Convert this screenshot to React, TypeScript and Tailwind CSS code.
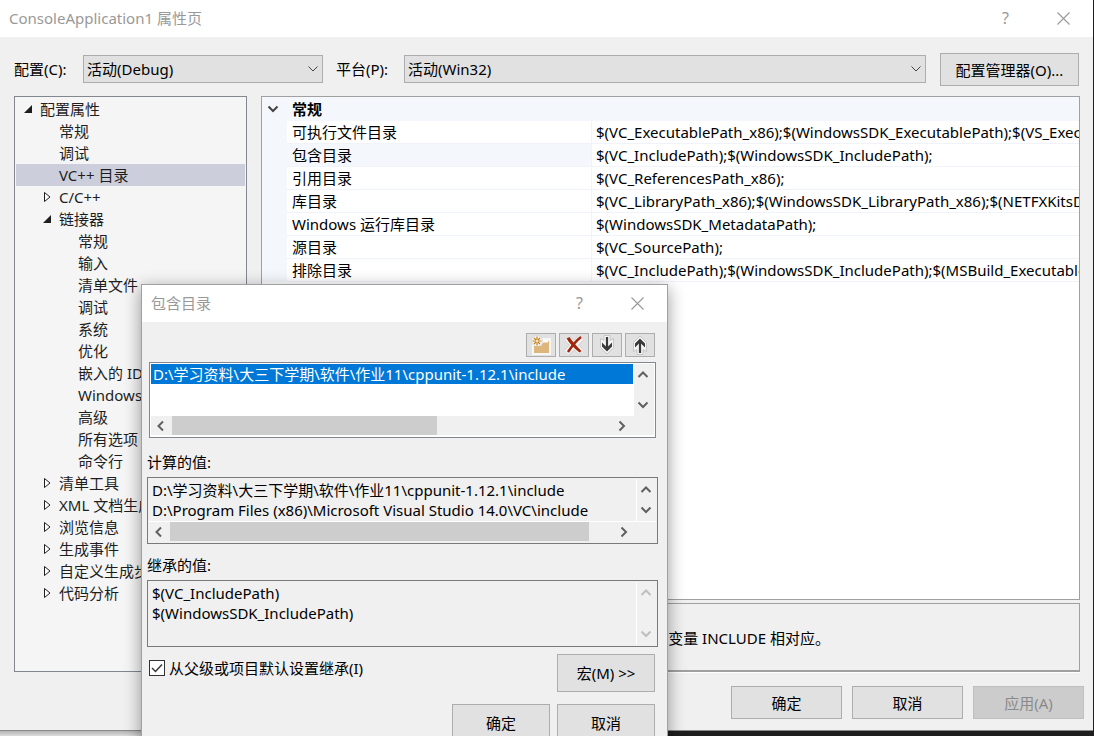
import type { ReactNode } from 'react';

type TreeItem = {
    label: string;
    level: number;
    state?: 'open' | 'closed';
    selected?: boolean;
};

const treeItems: TreeItem[] = [
    { label: '配置属性', level: 0, state: 'open' },
    { label: '常规', level: 1 },
    { label: '调试', level: 1 },
    { label: 'VC++ 目录', level: 1, selected: true },
    { label: 'C/C++', level: 1, state: 'closed' },
    { label: '链接器', level: 1, state: 'open' },
    { label: '常规', level: 2 },
    { label: '输入', level: 2 },
    { label: '清单文件', level: 2 },
    { label: '调试', level: 2 },
    { label: '系统', level: 2 },
    { label: '优化', level: 2 },
    { label: '嵌入的 IDL', level: 2 },
    { label: 'Windows 元数据', level: 2 },
    { label: '高级', level: 2 },
    { label: '所有选项', level: 2 },
    { label: '命令行', level: 2 },
    { label: '清单工具', level: 1, state: 'closed' },
    { label: 'XML 文档生成器', level: 1, state: 'closed' },
    { label: '浏览信息', level: 1, state: 'closed' },
    { label: '生成事件', level: 1, state: 'closed' },
    { label: '自定义生成步骤', level: 1, state: 'closed' },
    { label: '代码分析', level: 1, state: 'closed' },
];

const levelPadding = ['pl-[5px]', 'pl-[24px]', 'pl-[43px]'];

const properties = [
    { name: '可执行文件目录', value: '$(VC_ExecutablePath_x86);$(WindowsSDK_ExecutablePath);$(VS_ExecutablePath)' },
    { name: '包含目录', value: '$(VC_IncludePath);$(WindowsSDK_IncludePath);', selected: true },
    { name: '引用目录', value: '$(VC_ReferencesPath_x86);' },
    { name: '库目录', value: '$(VC_LibraryPath_x86);$(WindowsSDK_LibraryPath_x86);$(NETFXKitsDir)' },
    { name: 'Windows 运行库目录', value: '$(WindowsSDK_MetadataPath);' },
    { name: '源目录', value: '$(VC_SourcePath);' },
    { name: '排除目录', value: '$(VC_IncludePath);$(WindowsSDK_IncludePath);$(MSBuild_ExecutablePath)' },
];

const arrowPaths = {
    up: 'M1.5 8 L6 3.5 L10.5 8',
    down: 'M1.5 3.5 L6 8 L10.5 3.5',
    left: 'M8 1.5 L3.5 6 L8 10.5',
    right: 'M3.5 1.5 L8 6 L3.5 10.5',
};

const Arrow = ({ dir, thin }: { dir: keyof typeof arrowPaths; thin?: boolean }) => (
    <svg width="12" height="12" viewBox="0 0 12 12" fill="none" stroke="currentColor" strokeWidth={thin ? 1 : 2}>
        <path d={arrowPaths[dir]} />
    </svg>
);

const TitleBar = ({ title }: { title: string }) => (
    <header className="flex h-[37px] shrink-0 items-center bg-white pl-[9px] pr-[23px] pb-px text-[#999999]">
        <h1 className="flex-1">{title}</h1>
        <button aria-label="帮助" className="flex w-[13px] justify-center text-[16px]">?</button>
        <button aria-label="关闭" className="ml-[45px]">
            <svg width="13" height="13" viewBox="0 0 13 13" stroke="currentColor" strokeWidth="1.1">
                <path d="M0.5 0.5 L12.5 12.5 M12.5 0.5 L0.5 12.5" />
            </svg>
        </button>
    </header>
);

const Expander = ({ state }: { state?: 'open' | 'closed' }) => (
    <span className="flex w-[19px] shrink-0 pl-[2px]">
        {state === 'open' && (
            <svg width="10" height="10" viewBox="0 0 10 10">
                <path d="M9 1 V9 H1 Z" fill="#1e1e1e" />
            </svg>
        )}
        {state === 'closed' && (
            <svg width="10" height="12" viewBox="0 0 10 12">
                <path d="M2.5 1.5 V10.5 L8 6 Z" fill="#ffffff" stroke="#1e1e1e" />
            </svg>
        )}
    </span>
);

const Combo = ({ id, value, className }: { id: string; value: string; className: string }) => (
    <div className={`relative ${className}`}>
        <select
            id={id}
            className="block h-[28px] w-full appearance-none border border-[#adadad] bg-[#e1e1e1] pl-[3px] pr-6 text-black"
        >
            <option>{value}</option>
        </select>
        <span className="pointer-events-none absolute inset-y-0 right-[4px] flex items-center text-[#444444]">
            <Arrow dir="down" thin />
        </span>
    </div>
);

const PushButton = ({ children, className, disabled }: { children: ReactNode; className: string; disabled?: boolean }) => (
    <button
        disabled={disabled}
        className={`flex items-center justify-center border border-[#adadad] bg-[#e1e1e1] disabled:border-[#bfbfbf] disabled:bg-[#cccccc] disabled:text-[#8a8a8a] ${className}`}
    >
        {children}
    </button>
);

const VerticalScroll = ({ className }: { className: string }) => (
    <div className={`flex w-[20px] shrink-0 flex-col items-center justify-between pr-[2px] ${className}`}>
        <button aria-label="向上滚动"><Arrow dir="up" /></button>
        <button aria-label="向下滚动"><Arrow dir="down" /></button>
    </div>
);

const HorizontalScroll = ({ thumb }: { thumb: string }) => (
    <div className="flex h-[19px] shrink-0 items-center bg-[#f0f0f0] pr-[26px] text-[#606060]">
        <button aria-label="向左滚动" className="flex w-[21px] shrink-0 justify-center pr-[2px]"><Arrow dir="left" /></button>
        <div className="h-full flex-1">
            <div className={`h-full bg-[#cdcdcd] ${thumb}`} />
        </div>
        <button aria-label="向右滚动" className="shrink-0"><Arrow dir="right" /></button>
    </div>
);

const NewFolderIcon = () => (
    <svg width="22" height="22" viewBox="0 0 22 22">
        <path d="M3 8 H11 L13 5 H20 V20 H3 Z" fill="#f6f6f6" stroke="#f6f6f6" strokeWidth="2" />
        <circle cx="7" cy="7" r="5.5" fill="#f6f6f6" stroke="#cfcfcf" strokeWidth="0.6" />
        <path d="M4 12 H11 L13 9 V7 H19 V19 H4 Z" fill="#dcb67a" />
        <path d="M13 6.5 H18 V8.5 H13 Z" fill="#ffffff" />
        <path d="M7 2.5 V11.5 M2.5 7 H11.5 M4 4 L10 10 M10 4 L4 10" stroke="#c27d1a" strokeWidth="1.2" />
        <circle cx="7" cy="7" r="1.5" fill="#fbe3b0" />
    </svg>
);

const DeleteIcon = () => (
    <svg width="22" height="22" viewBox="0 0 22 22" fill="none">
        <path d="M4 4 L18 18 M18 3.5 L4 18.5" stroke="#c8c8c8" strokeWidth="7" />
        <path d="M4 4 L18 18 M18 3.5 L4 18.5" stroke="#f6f6f6" strokeWidth="6" />
        <path d="M3.5 4.5 L6.5 3 Q10 8.5 18.5 17 L16.5 18.5 Q8 12 3.5 4.5 Z" fill="#a1260d" />
        <path d="M18 3 Q12 7.5 5 18" stroke="#a1260d" strokeWidth="2.6" />
    </svg>
);

const MoveIcon = ({ up }: { up?: boolean }) => (
    <svg width="22" height="22" viewBox="0 0 22 22" className={up ? 'rotate-180' : ''} fill="none">
        <path d="M8 1.5 H14 V6.5 L17.5 4.5 V13.5 L11 20 L4.5 13.5 V4.5 L8 6.5 Z" fill="#f6f6f6" stroke="#bdbdbd" strokeWidth="0.8" />
        <path d="M11 3 V16" stroke="#3a3a3a" strokeWidth="2.2" />
        <path d="M6 8.5 L11 13.5 L16 8.5 V12.5 L11 17.5 L6 12.5 Z" fill="#3a3a3a" />
    </svg>
);

const toolButtons = [
    { label: '新行', icon: <NewFolderIcon /> },
    { label: '删除', icon: <DeleteIcon /> },
    { label: '下移', icon: <MoveIcon /> },
    { label: '上移', icon: <MoveIcon up /> },
];

const ConfigTree = () => (
    <nav className="w-[233px] shrink-0 overflow-hidden border border-[#828790] bg-[#f5f5f5] p-px text-[#1e1e1e]">
        <ul>
            {treeItems.map((item, i) => (
                <li
                    key={i}
                    className={`flex h-[22px] items-center whitespace-nowrap ${levelPadding[item.level]} ${item.selected ? 'bg-[#cccedb]' : ''}`}
                >
                    <Expander state={item.state} />
                    {item.label}
                </li>
            ))}
        </ul>
    </nav>
);

const PropertyGrid = () => (
    <div className="min-h-0 flex-1 overflow-hidden border border-[#a0a0a0] bg-white">
        <table className="w-full table-fixed border-separate border-spacing-0">
            <colgroup>
                <col className="w-[25px]" />
                <col className="w-[305px]" />
                <col />
            </colgroup>
            <thead>
                <tr className="h-[24px] bg-[#f4f7fc]">
                    <th className="p-0 pl-[5px] text-[#444444]"><Arrow dir="down" /></th>
                    <th colSpan={2} className="p-0 pl-[5px] text-left font-bold">常规</th>
                </tr>
            </thead>
            <tbody>
                {properties.map((p) => (
                    <tr key={p.name} className="h-[23px]">
                        <td className="bg-[#f4f7fc] p-0" />
                        <td className={`border-b border-r border-[#f0f3fa] py-0 pl-[5px] ${p.selected ? 'bg-[#f4f7fc]' : ''}`}>{p.name}</td>
                        <td className="overflow-hidden whitespace-nowrap border-b border-[#f0f3fa] py-0 pl-[4px]">{p.value}</td>
                    </tr>
                ))}
            </tbody>
        </table>
    </div>
);

const IncludeDialog = () => (
    <section className="absolute left-[141px] top-[284px] w-[527px] border border-[#a0a0a0] bg-[#f0f0f0] shadow-[0_4px_16px_rgba(0,0,0,0.4)]">
        <TitleBar title="包含目录" />
        <div className="flex flex-col px-[5px] pt-[11px] pb-3">
            <div className="flex justify-end gap-[3px] pr-[7px]">
                {toolButtons.map((b) => (
                    <button
                        key={b.label}
                        aria-label={b.label}
                        className="flex h-[24px] w-[30px] items-center justify-center border border-[#adadad] bg-[#e1e1e1]"
                    >
                        {b.icon}
                    </button>
                ))}
            </div>

            <div className="ml-[2px] mr-[6px] mt-[5px] flex h-[76px] flex-col border border-[#828790] bg-white px-px pt-px pb-[2px]">
                <div className="flex min-h-0 flex-1">
                    <ul className="flex-1">
                        <li className="h-[20px] bg-[#0078d7] pl-[2px] leading-[20px] text-white">
                            D:\学习资料\大三下学期\软件\作业11\cppunit-1.12.1\include
                        </li>
                    </ul>
                    <VerticalScroll className="ml-px bg-[#f0f0f0] py-[5px] text-[#606060]" />
                </div>
                <HorizontalScroll thumb="w-[265px]" />
            </div>

            <label htmlFor="evaluated" className="mt-[13px] h-[22px] leading-[22px]">计算的值:</label>
            <div className="mr-[4px] mt-[4px] flex h-[67px] flex-col border border-[#7a7a7a] px-px pt-px pb-[2px]">
                <div className="flex min-h-0 flex-1 border-b border-white">
                    <textarea
                        id="evaluated"
                        readOnly
                        wrap="off"
                        className="min-w-0 flex-1 resize-none overflow-hidden pl-[3px] pt-px leading-[20px] outline-none"
                        value={'D:\\学习资料\\大三下学期\\软件\\作业11\\cppunit-1.12.1\\include\nD:\\Program Files (x86)\\Microsoft Visual Studio 14.0\\VC\\include'}
                    />
                    <VerticalScroll className="border-l border-white py-[5px] text-[#606060]" />
                </div>
                <HorizontalScroll thumb="w-[419px]" />
            </div>

            <label htmlFor="inherited" className="mt-[10px] h-[22px] leading-[22px]">继承的值:</label>
            <div className="mr-[4px] mt-[4px] flex h-[67px] border border-[#7a7a7a] p-px">
                <textarea
                    id="inherited"
                    readOnly
                    wrap="off"
                    className="min-w-0 flex-1 resize-none overflow-hidden pl-[3px] pt-px leading-[20px] outline-none"
                    value={'$(VC_IncludePath)\n$(WindowsSDK_IncludePath)'}
                />
                <VerticalScroll className="border-l border-white py-[5px] text-[#bfbfbf]" />
            </div>

            <div className="mt-[7px] flex items-start justify-between pl-[2px] pr-[7px]">
                <label className="flex h-[28px] items-center gap-[4px]">
                    <span className="relative flex">
                        <input type="checkbox" defaultChecked className="size-[16px] appearance-none border border-[#333333] bg-white" />
                        <svg width="16" height="16" viewBox="0 0 16 16" fill="none" className="pointer-events-none absolute inset-0">
                            <path d="M3 8 L6.5 11.5 L13 4.5" stroke="#333333" strokeWidth="1.4" />
                        </svg>
                    </span>
                    从父级或项目默认设置继承(I)
                </label>
                <PushButton className="h-[38px] w-[98px]">宏(M) &gt;&gt;</PushButton>
            </div>
            <div className="mt-[12px] flex justify-end gap-[7px] pr-[7px]">
                <PushButton className="h-[38px] w-[98px]">确定</PushButton>
                <PushButton className="h-[38px] w-[98px]">取消</PushButton>
            </div>
        </div>
    </section>
);

const App = () => {
    return (
        <div className="relative flex h-screen flex-col overflow-hidden bg-[#1e1e1e] font-['Noto_Sans','Noto_Sans_CJK_SC',sans-serif] text-[15px] leading-[20px] text-black">
            <main className="mr-px flex min-h-0 flex-1 flex-col border-b border-[#8a8a8a] bg-[#f0f0f0]">
                <TitleBar title="ConsoleApplication1 属性页" />

                <div className="flex px-[14px] pt-[16px]">
                    <div className="flex flex-1 items-center pb-px">
                        <label htmlFor="config" className="w-[69px] shrink-0">配置(C):</label>
                        <Combo id="config" value="活动(Debug)" className="w-[240px] shrink-0" />
                        <label htmlFor="platform" className="ml-[13px] w-[68px] shrink-0">平台(P):</label>
                        <Combo id="platform" value="活动(Win32)" className="flex-1" />
                    </div>
                    <PushButton className="ml-[14px] h-[33px] w-[139px] shrink-0">配置管理器(O)...</PushButton>
                </div>

                <div className="mt-[10px] flex min-h-0 flex-1 gap-[14px] pl-[14px] pr-[13px]">
                    <ConfigTree />
                    <div className="flex min-w-0 flex-1 flex-col gap-[3px]">
                        <PropertyGrid />
                        <div className="h-[69px] border border-b-2 border-[#a0a0a0] px-[14px] pt-[4px] shadow-[0_1px_0_#ffffff]">
                            <p className="font-bold">包含目录</p>
                            <p className="whitespace-nowrap">生成 VC++ 项目期间，搜索包含文件时使用的路径。 与环境变量 INCLUDE 相对应。</p>
                        </div>
                    </div>
                </div>

                <div className="mt-[14px] mb-[11px] flex justify-end gap-[10px] pr-[9px]">
                    <PushButton className="h-[33px] w-[111px]">确定</PushButton>
                    <PushButton className="h-[33px] w-[111px]">取消</PushButton>
                    <PushButton className="h-[33px] w-[111px]" disabled>应用(A)</PushButton>
                </div>
            </main>
            <div className="h-[5px] w-[150px] bg-linear-to-b from-[#b4b4b4] to-[#dcdcdc]" />
            <IncludeDialog />
        </div>
    );
};

export default App;
